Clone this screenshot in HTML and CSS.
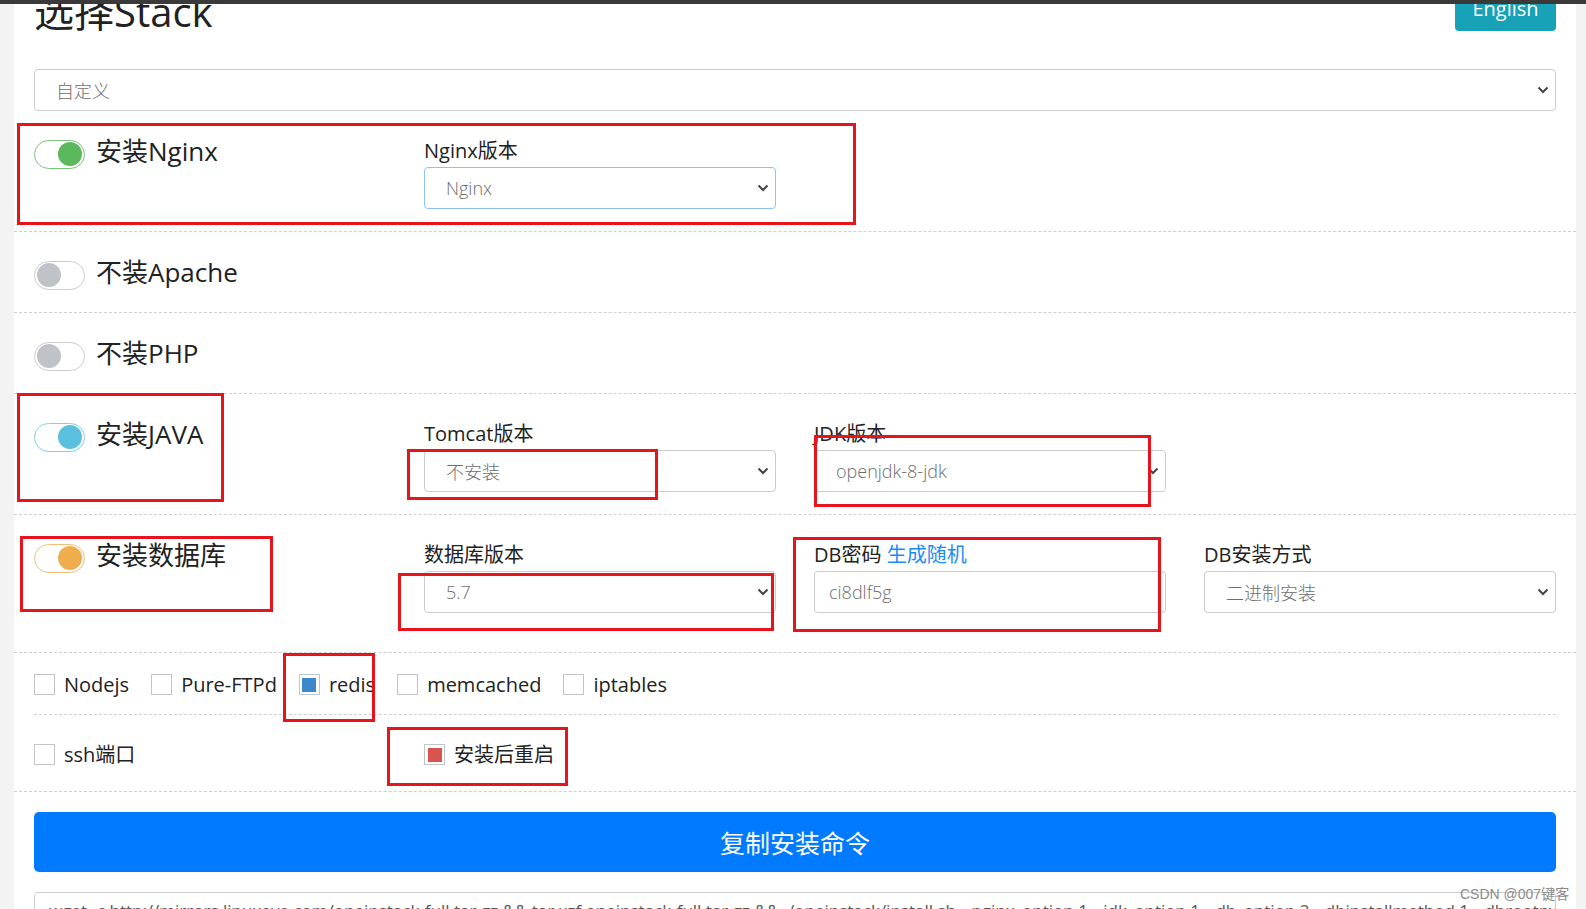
FILE: index.html
```html
<!DOCTYPE html>
<html lang="zh-CN">
<head>
<meta charset="utf-8">
<title>选择Stack</title>
<link rel="stylesheet" href="styles.css">
</head>
<body>
<div class="topbar"></div>
<div class="shell">
  <main class="page">
    <header class="head">
      <h1 class="title">选择Stack</h1>
      <button class="btn-lang" type="button">English</button>
    </header>

    <div class="select wide"><span>自定义</span><svg class="chev" viewBox="0 0 12 8" width="12" height="8"><path d="M1.5 1.5l4.5 4.5 4.5-4.5"/></svg></div>

    <section class="row">
      <div class="switch-col"><span class="switch on green"><i></i></span><span class="switch-label">安装Nginx</span></div>
      <div class="field">
        <label class="flabel">Nginx版本</label>
        <div class="select focus"><span>Nginx</span><svg class="chev" viewBox="0 0 12 8" width="12" height="8"><path d="M1.5 1.5l4.5 4.5 4.5-4.5"/></svg></div>
      </div>
    </section>

    <section class="row">
      <div class="switch-col"><span class="switch off"><i></i></span><span class="switch-label">不装Apache</span></div>
    </section>

    <section class="row">
      <div class="switch-col"><span class="switch off"><i></i></span><span class="switch-label">不装PHP</span></div>
    </section>

    <section class="row">
      <div class="switch-col"><span class="switch on blue"><i></i></span><span class="switch-label">安装JAVA</span></div>
      <div class="field">
        <label class="flabel">Tomcat版本</label>
        <div class="select"><span>不安装</span><svg class="chev" viewBox="0 0 12 8" width="12" height="8"><path d="M1.5 1.5l4.5 4.5 4.5-4.5"/></svg></div>
      </div>
      <div class="field">
        <label class="flabel">JDK版本</label>
        <div class="select"><span>openjdk-8-jdk</span><svg class="chev" viewBox="0 0 12 8" width="12" height="8"><path d="M1.5 1.5l4.5 4.5 4.5-4.5"/></svg></div>
      </div>
    </section>

    <section class="row row-db">
      <div class="switch-col"><span class="switch on orange"><i></i></span><span class="switch-label">安装数据库</span></div>
      <div class="field">
        <label class="flabel">数据库版本</label>
        <div class="select"><span>5.7</span><svg class="chev" viewBox="0 0 12 8" width="12" height="8"><path d="M1.5 1.5l4.5 4.5 4.5-4.5"/></svg></div>
      </div>
      <div class="field">
        <label class="flabel">DB密码 <a class="link" href="#">生成随机</a></label>
        <div class="input">ci8dlf5g</div>
      </div>
      <div class="field">
        <label class="flabel">DB安装方式</label>
        <div class="select"><span>二进制安装</span><svg class="chev" viewBox="0 0 12 8" width="12" height="8"><path d="M1.5 1.5l4.5 4.5 4.5-4.5"/></svg></div>
      </div>
    </section>

    <section class="checks">
      <div class="check-line">
        <span class="check"><span class="cb"></span>Nodejs</span>
        <span class="check"><span class="cb"></span>Pure-FTPd</span>
        <span class="check"><span class="cb checked blue"><i></i></span>redis</span>
        <span class="check"><span class="cb"></span>memcached</span>
        <span class="check"><span class="cb"></span>iptables</span>
      </div>
      <div class="check-grid">
        <span class="check"><span class="cb"></span>ssh端口</span>
        <span class="check"><span class="cb checked red"><i></i></span>安装后重启</span>
      </div>
    </section>

    <button class="btn-copy" type="button">复制安装命令</button>

    <div class="cmd">wget -c http://mirrors.linuxeye.com/oneinstack-full.tar.gz &amp;&amp; tar xzf oneinstack-full.tar.gz &amp;&amp; ./oneinstack/install.sh --nginx_option 1 --jdk_option 1 --db_option 2 --dbinstallmethod 1 --dbrootpwd ci8dlf5g --redis --reboot</div>
  </main>
</div>

<div class="mark m1"></div>
<div class="mark m2"></div>
<div class="mark m3"></div>
<div class="mark m4"></div>
<div class="mark m5"></div>
<div class="mark m6"></div>
<div class="mark m7"></div>
<div class="mark m8"></div>
<div class="mark m9"></div>

<div class="watermark">CSDN @007键客</div>
</body>
</html>
```

FILE: styles.css
```css
* { box-sizing: border-box; margin: 0; padding: 0; }

body {
  background: #f3f3f3;
  font-family: "Open Sans", "Noto Sans CJK SC", sans-serif;
  color: #222;
  overflow: hidden;
  height: 909px;
  position: relative;
}

.topbar {
  height: 4px;
  background: #3a3a3a;
  position: relative;
  z-index: 5;
}

.shell {
  padding-left: 14px;
  padding-right: 10px;
}

.page {
  background: #fff;
  height: 905px;
  overflow: hidden;
}

/* header */
.head {
  display: flex;
  justify-content: space-between;
  align-items: flex-end;
  height: 44px;
  margin-top: -17px;
  padding: 0 20px;
}
.title {
  font-size: 40px;
  line-height: 44px;
  font-weight: 400;
  color: #222;
  margin-bottom: -3px;
}
.btn-lang {
  width: 101px;
  height: 44px;
  background: #17a2b8;
  color: #fff;
  border: none;
  border-radius: 0 0 4px 4px;
  font-family: inherit;
  font-size: 20px;
  line-height: 44px;
}

/* selects */
.select, .input {
  height: 42px;
  border: 1px solid #ccc;
  border-radius: 4px;
  display: flex;
  align-items: center;
  font-size: 18px;
  font-weight: 300;
  color: #6e6e6e;
  background: #fff;
}
.select {
  justify-content: space-between;
  padding: 0 6px 0 21px;
}
.input { padding: 0 14px; }
.select.focus { border-color: #8cc2f5; }
.select.wide { margin: 38px 20px 0; }
.chev { fill: none; stroke: #444; stroke-width: 2; }

/* rows */
.row {
  display: grid;
  grid-template-columns: repeat(4, 352px);
  column-gap: 38px;
  align-items: start;
  padding: 28px 20px 22px;
  border-bottom: 1px dashed #cfcfcf;
}
.row-db { padding-bottom: 39px; }

.switch-col {
  display: flex;
  align-items: center;
  gap: 11px;
  height: 30px;
}
.switch {
  width: 51px;
  height: 29px;
  border: 1px solid #ccc;
  border-radius: 15px;
  display: flex;
  align-items: center;
  padding: 0 2px;
  background: #fff;
  flex: none;
}
.switch i {
  width: 24px;
  height: 24px;
  border-radius: 50%;
  background: #bfc3c7;
}
.switch.on { justify-content: flex-end; }
.switch.green { border-color: #7cc47c; }
.switch.green i { background: #5cb85c; }
.switch.blue { border-color: #7fd0e8; }
.switch.blue i { background: #5bc0de; }
.switch.orange { border-color: #f3c07a; }
.switch.orange i { background: #f0ad4e; }
.switch-label {
  font-size: 26px;
  line-height: 30px;
  color: #222;
  position: relative;
  top: -3px;
}

.flabel {
  display: block;
  font-size: 20px;
  line-height: 24px;
  margin-bottom: 4px;
  color: #222;
}
.link { color: #1c8cf0; text-decoration: none; }

/* checkboxes */
.checks {
  border-bottom: 1px dashed #cfcfcf;
}
.check-line {
  display: flex;
  align-items: center;
  margin: 0 20px;
  padding: 21px 0 19px;
  border-bottom: 1px dashed #cfcfcf;
}
.check-grid {
  display: grid;
  grid-template-columns: repeat(4, 352px);
  column-gap: 38px;
  margin: 0 20px;
  padding: 29px 0 26px;
}
.check {
  display: flex;
  align-items: center;
  font-size: 20px;
  line-height: 21px;
  color: #222;
  margin-right: 22px;
}
.cb {
  width: 21px;
  height: 21px;
  border: 1px solid #c4c4c4;
  background: #fff;
  margin-right: 9px;
  display: flex;
  align-items: center;
  justify-content: center;
  flex: none;
}
.cb i { width: 14px; height: 14px; }
.cb.blue { border-color: #b8c8dc; }
.cb.blue i { background: #3d87cb; }
.cb.red i { background: #d9534f; }

/* button and command */
.btn-copy {
  display: block;
  width: calc(100% - 40px);
  margin: 20px 20px 0;
  height: 60px;
  background: #007bff;
  border: none;
  border-radius: 5px;
  color: #fff;
  font-family: inherit;
  font-size: 25px;
}
.cmd {
  margin: 20px 20px 0;
  border: 1px solid #ccc;
  border-radius: 4px;
  padding: 6px 14px;
  height: 100px;
  font-size: 17px;
  line-height: 24px;
  color: #555;
  white-space: nowrap;
  overflow: hidden;
}

/* annotation boxes */
.mark {
  position: absolute;
  border: 3px solid #e8141c;
  z-index: 10;
}
.m1 { left: 17px;  top: 123px; width: 839px; height: 102px; }
.m2 { left: 17px;  top: 393px; width: 207px; height: 109px; }
.m3 { left: 407px; top: 449px; width: 251px; height: 51px; }
.m4 { left: 814px; top: 435px; width: 337px; height: 72px; }
.m5 { left: 20px;  top: 536px; width: 253px; height: 76px; }
.m6 { left: 398px; top: 573px; width: 376px; height: 58px; }
.m7 { left: 793px; top: 537px; width: 368px; height: 95px; }
.m8 { left: 283px; top: 653px; width: 92px;  height: 69px; }
.m9 { left: 387px; top: 727px; width: 181px; height: 59px; }

.watermark {
  position: absolute;
  left: 1460px;
  top: 883px;
  font-family: "Liberation Sans", "Noto Sans CJK SC", sans-serif;
  font-size: 14px;
  color: #8a8a8a;
  z-index: 11;
}
```
